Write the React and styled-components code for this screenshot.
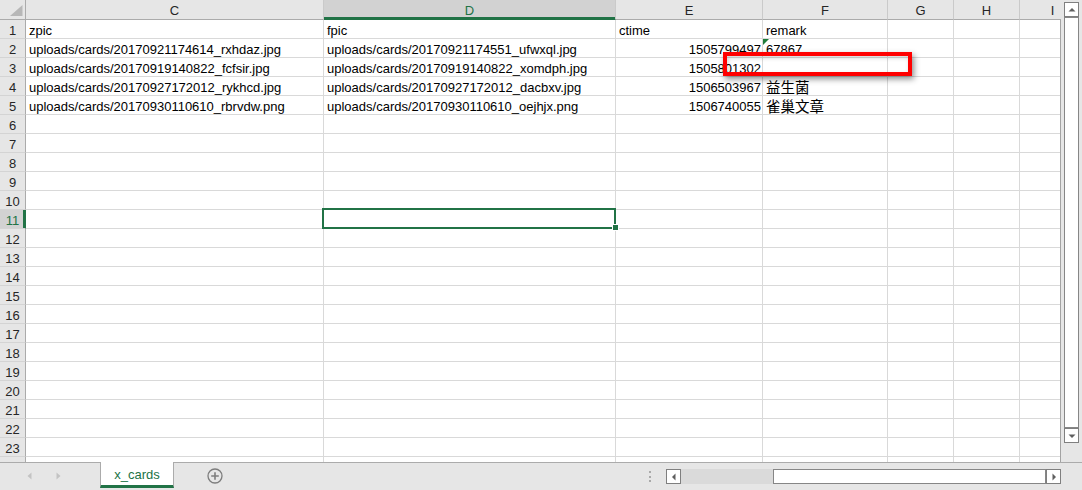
import React from 'react';
import styled, { createGlobalStyle, css } from 'styled-components';

const GREEN = '#217346';
const FONT = `"Liberation Sans", Arial, "Noto Sans CJK SC", sans-serif`;

const GlobalStyle = createGlobalStyle`
  html, body { margin: 0; padding: 0; background: #e6e6e6; }
  body { font-family: ${FONT}; }
  *, *::before, *::after { box-sizing: border-box; }
`;

const COLS = [
  { key: 'C', w: 298 },
  { key: 'D', w: 292 },
  { key: 'E', w: 147 },
  { key: 'F', w: 125 },
  { key: 'G', w: 66 },
  { key: 'H', w: 66 },
  { key: 'I', w: 66 },
];
const TEMPLATE = `26px ${COLS.map((c) => `${c.w}px`).join(' ')}`;

const DATA = {
  1: { C: 'zpic', D: 'fpic', E: 'ctime', F: 'remark' },
  2: {
    C: 'uploads/cards/20170921174614_rxhdaz.jpg',
    D: 'uploads/cards/20170921174551_ufwxql.jpg',
    E: 1505799497,
    F: { text: '67867', flag: true },
  },
  3: {
    C: 'uploads/cards/20170919140822_fcfsir.jpg',
    D: 'uploads/cards/20170919140822_xomdph.jpg',
    E: 1505801302,
  },
  4: {
    C: 'uploads/cards/20170927172012_rykhcd.jpg',
    D: 'uploads/cards/20170927172012_dacbxv.jpg',
    E: 1506503967,
    F: { text: '益生菌', cjk: true },
  },
  5: {
    C: 'uploads/cards/20170930110610_rbrvdw.png',
    D: 'uploads/cards/20170930110610_oejhjx.png',
    E: 1506740055,
    F: { text: '雀巢文章', cjk: true },
  },
};

const SELECTED = { row: 11, col: 'D' };
const VISIBLE_ROWS = 23;

/* ---------- window layout ---------- */
const Window = styled.div`
  width: 1082px;
  height: 490px;
  display: flex;
  flex-direction: column;
  background: #e6e6e6;
  overflow: hidden;
  font-family: ${FONT};
  color: #000;
`;

const Main = styled.div`
  display: flex;
  height: 462px;
`;

const Sheet = styled.div`
  position: relative;
  width: 1061px;
  display: flex;
  flex-direction: column;
  overflow: hidden;
`;

/* ---------- column header ---------- */
const HeaderRow = styled.div`
  display: grid;
  grid-template-columns: ${TEMPLATE};
  height: 20px;
  flex: none;
  background: #e6e6e6;
`;

const Corner = styled.div`
  border-right: 1px solid #ababab;
  border-bottom: 1px solid #ababab;
  display: flex;
  svg { display: block; }
`;

const ColHead = styled.div`
  border-right: 1px solid #cacaca;
  border-bottom: 1px solid #ababab;
  display: flex;
  align-items: center;
  justify-content: center;
  padding-top: 1px;
  font-size: 13px;
  line-height: 15px;
  color: #262626;
  white-space: nowrap;
  ${(p) =>
    p.$selected &&
    css`
      background: #d2d2d2;
      color: ${GREEN};
      border-bottom-color: ${GREEN};
      box-shadow: inset 0 -2px 0 ${GREEN};
    `}
`;

/* ---------- body ---------- */
const Body = styled.div`
  flex: 1;
  background: #fff;
  border-right: 1px solid #a3a3a3;
  overflow: hidden;
`;

const Row = styled.div`
  display: grid;
  grid-template-columns: ${TEMPLATE};
  height: 19px;
`;

const RowHead = styled.div`
  background: #e6e6e6;
  border-right: 1px solid #ababab;
  border-bottom: 1px solid #d4d4d4;
  display: flex;
  align-items: flex-end;
  justify-content: center;
  font-size: 13px;
  line-height: 15px;
  color: #262626;
  ${(p) =>
    p.$selected &&
    css`
      background: #d2d2d2;
      color: ${GREEN};
      border-right-color: ${GREEN};
      box-shadow: inset -2px 0 0 ${GREEN};
    `}
`;

const Cell = styled.div`
  position: relative;
  border-right: 1px solid #d9d9d9;
  border-bottom: 1px solid #d9d9d9;
  display: flex;
  align-items: flex-end;
  justify-content: ${(p) => (p.$right ? 'flex-end' : 'flex-start')};
  padding: 0 ${(p) => (p.$right ? '1px' : '2px')} 0 3px;
  font-size: 13px;
  line-height: 15px;
  white-space: nowrap;
  ${(p) =>
    p.$flag &&
    css`
      &::before {
        content: '';
        position: absolute;
        left: 0;
        top: 0;
        width: 6px;
        height: 6px;
        background: #1e7d3a;
        clip-path: polygon(0 0, 100% 0, 0 100%);
      }
    `}
  ${(p) =>
    p.$selected &&
    css`
      z-index: 2;
      &::after {
        content: '';
        position: absolute;
        left: -2px;
        top: -2px;
        width: calc(100% + 3px);
        height: calc(100% + 3px);
        border: 2px solid ${GREEN};
        pointer-events: none;
      }
      &::before {
        content: '';
        position: absolute;
        right: -3px;
        bottom: -2px;
        width: 5px;
        height: 5px;
        background: ${GREEN};
        box-shadow: 0 0 0 1px #fff;
        z-index: 1;
      }
    `}
`;

const Cjk = styled.span`
  font-family: "Noto Sans CJK SC", "Noto Sans CJK TC", sans-serif;
  font-size: 14.5px;
  line-height: 17px;
`;

const Annotation = styled.div`
  position: absolute;
  left: 723px;
  top: 52px;
  width: 189px;
  height: 24px;
  border: 4px solid #ff0000;
  box-shadow: 2px 3px 6px rgba(0, 0, 0, 0.45), inset 1px 2px 4px rgba(0, 0, 0, 0.18);
  z-index: 3;
  pointer-events: none;
`;

/* ---------- scrollbars ---------- */
const VPanel = styled.div`
  width: 21px;
  padding: 2px 0 0 3px;
  display: flex;
  flex-direction: column;
`;

const VScroll = styled.div`
  width: 15px;
  display: flex;
  flex-direction: column;
`;

const ScrollBtn = styled.div`
  width: 15px;
  height: 15px;
  flex: none;
  background: #fff;
  border: 1px solid #7f7f7f;
  display: flex;
  align-items: center;
  justify-content: center;
  svg { display: block; }
`;

const Thumb = styled.div`
  background: #fff;
  border: 1px solid #868686;
  flex: none;
  ${(p) => (p.$vertical ? `height: ${p.$size}px;` : `width: ${p.$size}px;`)}
`;

const Track = styled.div`
  background: #dadada;
  flex: ${(p) => (p.$size ? `none` : '1')};
  ${(p) => p.$size && (p.$vertical ? `height: ${p.$size}px;` : `width: ${p.$size}px;`)}
`;

const HScroll = styled.div`
  display: flex;
  width: 395px;
  height: 15px;
  margin-top: 6px;
  margin-right: 21px;
`;

/* ---------- tab bar ---------- */
const TabBar = styled.div`
  height: 28px;
  border-top: 1px solid #ababab;
  display: flex;
  align-items: flex-start;
`;

const Nav = styled.div`
  width: 100px;
  height: 25px;
  display: flex;
  align-items: center;
  gap: 24px;
  padding-left: 27px;
  svg { display: block; }
`;

const Tab = styled.div`
  width: 74px;
  height: 26px;
  margin-top: -1px;
  background: #fff;
  border-left: 1px solid #ababab;
  border-right: 1px solid #ababab;
  border-bottom: 3px solid ${GREEN};
  display: flex;
  align-items: center;
  justify-content: center;
  padding-top: 1px;
  font-size: 13px;
  color: ${GREEN};
`;

const AddButton = styled.div`
  margin-left: 33px;
  margin-top: 5px;
  width: 16px;
  height: 16px;
  svg { display: block; }
`;

const Spacer = styled.div`
  flex: 1;
`;

const Splitter = styled.div`
  margin-top: 8px;
  margin-right: 15px;
  display: flex;
  flex-direction: column;
  gap: 2.5px;
  span {
    width: 2px;
    height: 2px;
    background: #a9a9a9;
  }
`;

/* ---------- icons ---------- */
const Arrow = ({ dir, color = '#5f5f5f' }) => {
  const pts = {
    up: '3.5,8.5 10.5,8.5 7,5',
    down: '3.5,5.5 10.5,5.5 7,9',
    left: '8.5,3.5 8.5,10.5 5,7',
    right: '5.5,3.5 5.5,10.5 9,7',
  }[dir];
  return (
    <svg width="13" height="13" viewBox="0 0 13 13">
      <polygon points={pts} fill={color} />
    </svg>
  );
};

const NavArrow = ({ dir }) => (
  <svg width="5" height="8" viewBox="0 0 5 8">
    <polygon points={dir === 'left' ? '4.5,0.5 4.5,7.5 0.5,4' : '0.5,0.5 0.5,7.5 4.5,4'} fill="#c3c3c3" />
  </svg>
);

const CornerIcon = () => (
  <svg width="25" height="19" viewBox="0 0 25 19">
    <polygon points="10,16 22.5,16 22.5,5" fill="#b7b7b7" />
  </svg>
);

const PlusIcon = () => (
  <svg width="16" height="16" viewBox="0 0 16 16">
    <circle cx="8" cy="8" r="7" fill="none" stroke="#7d7d7d" strokeWidth="1.3" />
    <path d="M8 4.2V11.8M4.2 8H11.8" stroke="#7d7d7d" strokeWidth="1.6" />
  </svg>
);

function renderValue(v) {
  if (v == null) return { content: null };
  if (typeof v === 'number') return { content: String(v), right: true };
  if (typeof v === 'string') return { content: v };
  return { content: v.cjk ? <Cjk>{v.text}</Cjk> : v.text, flag: v.flag };
}

export default function App() {
  const rows = Array.from({ length: VISIBLE_ROWS }, (_, i) => i + 1);
  return (
    <>
      <GlobalStyle />
      <Window>
        <Main>
          <Sheet>
            <HeaderRow>
              <Corner>
                <CornerIcon />
              </Corner>
              {COLS.map((c) => (
                <ColHead key={c.key} $selected={c.key === SELECTED.col}>
                  {c.key}
                </ColHead>
              ))}
            </HeaderRow>
            <Body>
              {rows.map((r) => (
                <Row key={r}>
                  <RowHead $selected={r === SELECTED.row}>{r}</RowHead>
                  {COLS.map((c) => {
                    const { content, right, flag } = renderValue(DATA[r]?.[c.key]);
                    return (
                      <Cell
                        key={c.key}
                        $right={right}
                        $flag={flag}
                        $selected={r === SELECTED.row && c.key === SELECTED.col}
                      >
                        {content}
                      </Cell>
                    );
                  })}
                </Row>
              ))}
              {/* partially visible next row (its number is below the fold) */}
              <Row>
                <RowHead />
                {COLS.map((c) => (
                  <Cell key={c.key} />
                ))}
              </Row>
            </Body>
            <Annotation />
          </Sheet>
          <VPanel>
            <VScroll>
              <ScrollBtn>
                <Arrow dir="up" />
              </ScrollBtn>
              <Thumb $vertical $size={411} />
              <Track $vertical />
              <ScrollBtn>
                <Arrow dir="down" />
              </ScrollBtn>
            </VScroll>
          </VPanel>
        </Main>
        <TabBar>
          <Nav>
            <NavArrow dir="left" />
            <NavArrow dir="right" />
          </Nav>
          <Tab>x_cards</Tab>
          <AddButton>
            <PlusIcon />
          </AddButton>
          <Spacer />
          <Splitter>
            <span />
            <span />
            <span />
          </Splitter>
          <HScroll>
            <ScrollBtn>
              <Arrow dir="left" />
            </ScrollBtn>
            <Track $size={92} />
            <Thumb $size={273} />
            <ScrollBtn>
              <Arrow dir="right" />
            </ScrollBtn>
          </HScroll>
        </TabBar>
      </Window>
    </>
  );
}
